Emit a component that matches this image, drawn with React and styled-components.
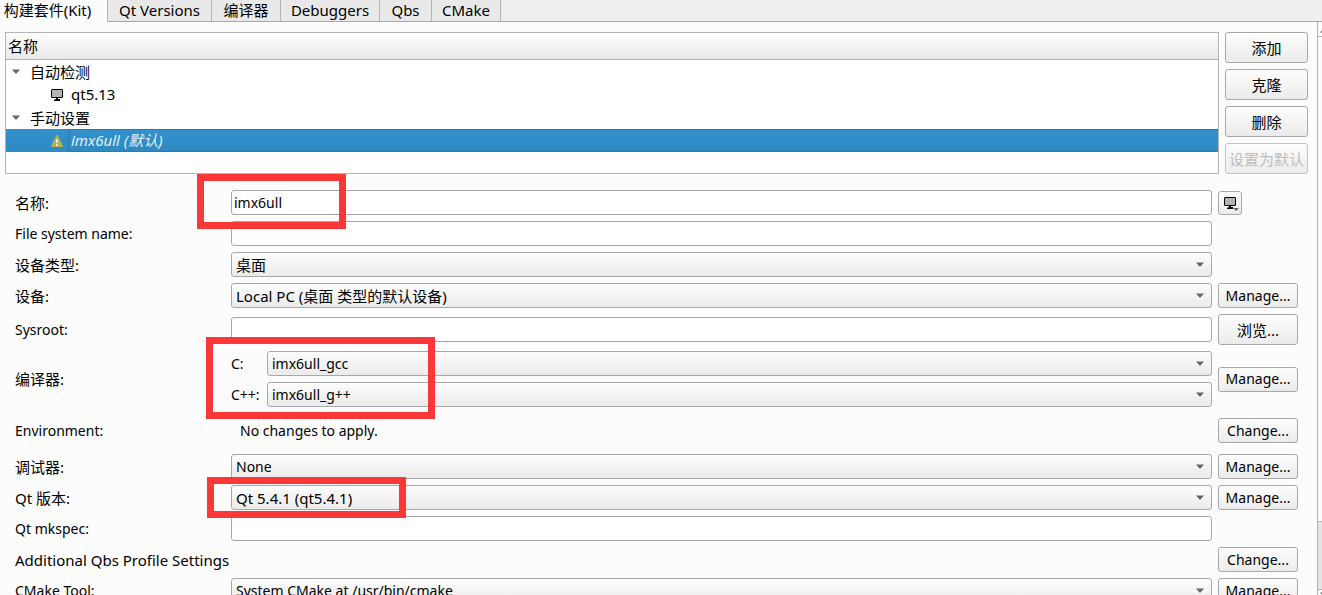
import React from 'react'
import styled, { createGlobalStyle, css } from 'styled-components'

const GlobalStyle = createGlobalStyle`
    * {
        box-sizing: border-box;
    }

    body {
        margin: 0;
        background: #fcfcfc;
    }

    body, button, input, select {
        font-family: "Noto Sans", "Noto Sans CJK SC", sans-serif;
        font-size: 14px;
        line-height: 20px;
        color: #000;
    }
`

const raised = css`
    border: 1px solid #a8a8a8;
    border-radius: 3px;
    background: linear-gradient(#fdfdfd, #ebebeb);
`

const Window = styled.div`
    display: flex;
    flex-direction: column;
    height: 100vh;
    overflow: hidden;
`

const TabBar = styled.nav`
    display: flex;
    flex: none;
    height: 22px;
    background: #efefef;

    &::after {
        content: "";
        flex: 1;
        border-bottom: 1px solid #a8a8a8;
    }
`

const Tab = styled.button`
    border: 0;
    border-right: 1px solid #b4b4b4;
    border-bottom: 1px solid ${({ $active }) => ($active ? '#fcfcfc' : '#a8a8a8')};
    background: ${({ $active }) => ($active ? '#fcfcfc' : '#e9e9e9')};
    width: ${({ $width }) => $width}px;
    padding: 0 ${({ $active }) => ($active ? 12 : 0)}px 2px 0;
    font-size: 15px;
    white-space: nowrap;
`

const Body = styled.div`
    display: flex;
    flex: 1;
    min-height: 0;
`

const Page = styled.main`
    flex: 1;
    min-width: 0;
    padding: 10px 9px 0 5px;
`

const KitArea = styled.section`
    display: flex;
    gap: 6px;
`

const Tree = styled.div`
    flex: 1;
    border: 1px solid #b4b4b4;
    background: #fff;
    font-size: 15px;
`

const TreeHeader = styled.div`
    height: 27px;
    padding: 3px 2px;
    border-bottom: 1px solid #b0b0b0;
    background: linear-gradient(#fdfdfd, #e9e9e9);
`

const TreeRow = styled.div`
    display: flex;
    align-items: center;
    height: 23px;
    padding-left: ${({ $child }) => ($child ? 45 : 6)}px;
    gap: ${({ $child }) => ($child ? 5 : 10)}px;
    ${({ $selected }) => $selected && css`
        background: linear-gradient(#3291cd, #2e89c1);
        color: #e4f0f8;
        font-style: italic;
    `}
`

const TreeCell = styled.span`
    flex: 1;
    height: 23px;
    padding-left: 2px;
    border: 1px solid ${({ $focused }) => ($focused ? '#2a7bae' : 'transparent')};
    border-width: 1px 0 1px 1px;
    line-height: 21px;
`

const ButtonColumn = styled.div`
    display: flex;
    flex-direction: column;
    gap: 6px;
    width: 83px;
`

const Button = styled.button`
    ${raised}
    width: 100%;
    height: ${({ $tall }) => ($tall ? 31 : 25)}px;
    padding: 0;
    font-size: ${({ $tall }) => ($tall ? 15 : 14)}px;
    white-space: nowrap;

    &:disabled {
        color: #bebebe;
        border-color: #c4c4c4;
    }
`

const IconButton = styled.button`
    ${raised}
    position: relative;
    display: flex;
    align-items: center;
    justify-content: center;
    width: 24px;
    height: 24px;
    padding: 0;
`

const MenuMark = styled.span`
    position: absolute;
    right: 2px;
    bottom: 3px;
    border: 3px solid transparent;
    border-top-color: #666;
    border-bottom: 0;
`

const Form = styled.form`
    display: grid;
    gap: 6px;
    margin: 16px 10px 0;
`

const Row = styled.div`
    display: grid;
    grid-template-columns: 210px 1fr 80px;
    column-gap: 6px;
    align-items: center;
    min-height: ${({ $tall }) => ($tall ? 35 : 25)}px;
`

const Label = styled.label`
    font-size: ${({ $large }) => ($large ? 15 : 14)}px;
    white-space: nowrap;
`

const Field = styled.div`
    position: relative;
    display: grid;
    gap: 6px;
`

const Input = styled.input`
    width: 100%;
    height: 25px;
    padding: 0 2px;
    border: 1px solid #a8a8a8;
    border-radius: 3px;
    background: #fff;
    outline: 0;
`

const SelectBox = styled.div`
    position: relative;
    height: 25px;

    svg {
        position: absolute;
        right: 8px;
        top: 10px;
        pointer-events: none;
    }
`

const SelectInput = styled.select`
    ${raised}
    appearance: none;
    display: block;
    width: 100%;
    height: 25px;
    padding: 0 20px 0 4px;
    font-size: ${({ $large }) => ($large ? 15 : 14)}px;
`

const Compiler = styled.div`
    display: grid;
    grid-template-columns: 30px 1fr;
    column-gap: 6px;
    align-items: center;
`

const Summary = styled.span`
    padding-left: 9px;
`

const Highlight = styled.div`
    position: absolute;
    z-index: 1;
    left: ${({ $left }) => $left}px;
    top: ${({ $top }) => $top}px;
    width: ${({ $width }) => $width}px;
    height: ${({ $height }) => $height}px;
    border: 7px solid #fc3737;
    pointer-events: none;
`

const ScrollBar = styled.div`
    display: flex;
    flex-direction: column;
    width: 5px;
    overflow: hidden;
    border-left: 1px solid #b4b4b4;
    background: #fcfcfc;
`

const ScrollStep = styled.div`
    flex: none;
    height: ${({ $up }) => ($up ? 15 : 5)}px;
    padding: ${({ $up }) => ($up ? 6 : 2)}px 0 0 2px;
    border-bottom: ${({ $up }) => ($up ? '1px solid #b4b4b4' : 0)};

    svg {
        display: block;
        transform: ${({ $up }) => ($up ? 'rotate(180deg)' : 'none')};
    }
`

const ScrollThumb = styled.div`
    height: 69px;
    margin-top: auto;
    border: 1px solid #b4b4b4;
    border-width: 1px 0;
    background: #e4e4e4;
`

const Arrow = () => (
    <svg width="8" height="5" viewBox="0 0 8 5" aria-hidden="true">
        <path d="M0 0.5H8L4.5 4.5H3.5Z" fill="#666" />
    </svg>
)

const Monitor = () => (
    <svg width="12" height="12" viewBox="0 0 12 12" aria-hidden="true">
        <rect x="0.5" y="0.5" width="11" height="8" rx="0.5" fill="#b5b3b6" stroke="#000" />
        <path d="M5 9H7V10H9V12H3V11L5 10Z" fill="#000" />
    </svg>
)

const Warning = () => (
    <svg width="12" height="12" viewBox="0 0 12 12" aria-hidden="true">
        <path d="M5.5 0H6.5L12 11V12H0V11Z" fill="#b5ae4f" />
        <path d="M5 4H7V8H5ZM5 9H7V11H5Z" fill="#dbe6df" />
    </svg>
)

const Select = ({ value, ...props }) => (
    <SelectBox>
        <SelectInput defaultValue={value} {...props}>
            <option>{value}</option>
        </SelectInput>
        <Arrow />
    </SelectBox>
)

const tabs = [
    { title: '构建套件(Kit)', width: 108 },
    { title: 'Qt Versions', width: 104 },
    { title: '编译器', width: 69 },
    { title: 'Debuggers', width: 99 },
    { title: 'Qbs', width: 52 },
    { title: 'CMake', width: 69 },
]

const App = () => (
    <Window>
        <GlobalStyle />
        <TabBar>
            {tabs.map((tab, index) => (
                <Tab key={tab.title} type="button" $active={index === 0} $width={tab.width}>{tab.title}</Tab>
            ))}
        </TabBar>
        <Body>
            <Page>
                <KitArea>
                    <Tree role="tree">
                        <TreeHeader>名称</TreeHeader>
                        <TreeRow role="treeitem"><Arrow />自动检测</TreeRow>
                        <TreeRow role="treeitem" $child><Monitor /><TreeCell>qt5.13</TreeCell></TreeRow>
                        <TreeRow role="treeitem"><Arrow />手动设置</TreeRow>
                        <TreeRow role="treeitem" aria-selected="true" $child $selected>
                            <Warning />
                            <TreeCell $focused>imx6ull (默认)</TreeCell>
                        </TreeRow>
                    </Tree>
                    <ButtonColumn>
                        <Button type="button" $tall>添加</Button>
                        <Button type="button" $tall>克隆</Button>
                        <Button type="button" $tall>删除</Button>
                        <Button type="button" $tall disabled>设置为默认</Button>
                    </ButtonColumn>
                </KitArea>
                <Form>
                    <Row>
                        <Label htmlFor="name" $large>名称:</Label>
                        <Field>
                            <Input id="name" defaultValue="imx6ull" />
                            <Highlight $left={-34} $top={-16} $width={149} $height={55} />
                        </Field>
                        <IconButton type="button" aria-label="Kit icon">
                            <Monitor />
                            <MenuMark />
                        </IconButton>
                    </Row>
                    <Row>
                        <Label htmlFor="fsname">File system name:</Label>
                        <Field><Input id="fsname" /></Field>
                    </Row>
                    <Row>
                        <Label htmlFor="devtype" $large>设备类型:</Label>
                        <Field><Select id="devtype" value="桌面" $large /></Field>
                    </Row>
                    <Row>
                        <Label htmlFor="device" $large>设备:</Label>
                        <Field><Select id="device" value="Local PC (桌面 类型的默认设备)" $large /></Field>
                        <Button type="button">Manage...</Button>
                    </Row>
                    <Row>
                        <Label htmlFor="sysroot">Sysroot:</Label>
                        <Field><Input id="sysroot" /></Field>
                        <Button type="button" $tall>浏览...</Button>
                    </Row>
                    <Row>
                        <Label as="span" $large>编译器:</Label>
                        <Field>
                            <Compiler>
                                <Label htmlFor="cc">C:</Label>
                                <Select id="cc" value="imx6ull_gcc" />
                            </Compiler>
                            <Compiler>
                                <Label htmlFor="cxx">C++:</Label>
                                <Select id="cxx" value="imx6ull_g++" />
                            </Compiler>
                            <Highlight $left={-25} $top={-14} $width={229} $height={82} />
                        </Field>
                        <Button type="button">Manage...</Button>
                    </Row>
                    <Row $tall>
                        <Label as="span">Environment:</Label>
                        <Summary>No changes to apply.</Summary>
                        <Button type="button">Change...</Button>
                    </Row>
                    <Row>
                        <Label htmlFor="debugger" $large>调试器:</Label>
                        <Field><Select id="debugger" value="None" /></Field>
                        <Button type="button">Manage...</Button>
                    </Row>
                    <Row>
                        <Label htmlFor="qt" $large>Qt 版本:</Label>
                        <Field>
                            <Select id="qt" value="Qt 5.4.1 (qt5.4.1)" $large />
                            <Highlight $left={-24} $top={-8} $width={199} $height={41} />
                        </Field>
                        <Button type="button">Manage...</Button>
                    </Row>
                    <Row>
                        <Label htmlFor="mkspec">Qt mkspec:</Label>
                        <Field><Input id="mkspec" /></Field>
                    </Row>
                    <Row>
                        <Label as="span" $large>Additional Qbs Profile Settings</Label>
                        <span />
                        <Button type="button">Change...</Button>
                    </Row>
                    <Row>
                        <Label htmlFor="cmake">CMake Tool:</Label>
                        <Field><Select id="cmake" value="System CMake at /usr/bin/cmake" /></Field>
                        <Button type="button">Manage...</Button>
                    </Row>
                </Form>
            </Page>
            <ScrollBar>
                <ScrollStep $up><Arrow /></ScrollStep>
                <ScrollThumb />
                <ScrollStep><Arrow /></ScrollStep>
            </ScrollBar>
        </Body>
    </Window>
)

export default App
